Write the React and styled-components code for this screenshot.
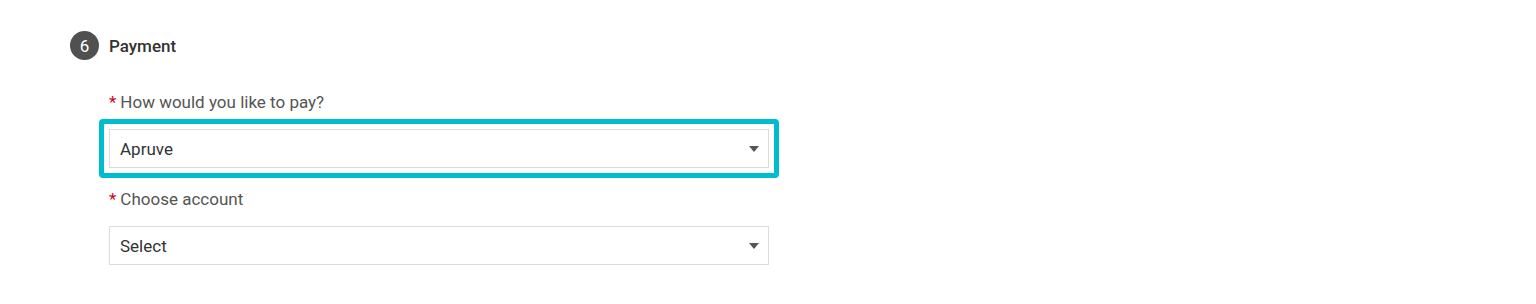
import React from "react";
import styled, { createGlobalStyle } from "styled-components";

const Global = createGlobalStyle`
  html, body { margin: 0; padding: 0; background: #fff; }
  body { font-family: Roboto, "Liberation Sans", Arial, sans-serif; -webkit-font-smoothing: antialiased; }
`;

const Page = styled.div`
  width: 1536px;
  height: 304px;
  box-sizing: border-box;
  padding: 31px 0 0 70px;
`;

const StepHeader = styled.div`
  display: flex;
  align-items: center;
  gap: 10px;
`;

const StepNumber = styled.div`
  width: 29px;
  height: 29px;
  border-radius: 50%;
  background: #505050;
  color: #fff;
  font-size: 17px;
  display: flex;
  align-items: center;
  justify-content: center;
`;

const StepTitle = styled.div`
  font-size: 17px;
  font-weight: 500;
  color: #333;
`;

const Fields = styled.div`
  margin-left: 39px;
  padding-top: 32px;
  display: flex;
  flex-direction: column;
  gap: 21px;
  width: 660px;
`;

const Field = styled.div`
  display: flex;
  flex-direction: column;
  gap: 17px;
`;

const Label = styled.label`
  font-size: 17px;
  line-height: 20px;
  color: #555;
`;

const Required = styled.span`
  color: #d0021b;
  margin-right: 4px;
`;

const Focus = styled.div`
  margin: -10px;
  padding: 5px;
  border: 5px solid ${(p) => (p.$active ? "#00bcd0" : "transparent")};
  border-radius: 4px;
`;

const SelectBox = styled.div`
  box-sizing: border-box;
  height: 39px;
  border: 1px solid #dcdcdc;
  background: #fff;
  display: flex;
  align-items: center;
  justify-content: space-between;
  padding: 0 9px 0 10px;
  font-size: 17px;
  color: #333;
`;

const Arrow = () => (
  <svg width="10" height="6" viewBox="0 0 10 6" aria-hidden="true">
    <path d="M0 0 H10 L5 6 Z" fill="#555" />
  </svg>
);

const Select = ({ value, active }) => (
  <Focus $active={active}>
    <SelectBox role="combobox">
      <span>{value}</span>
      <Arrow />
    </SelectBox>
  </Focus>
);

export default function App() {
  return (
    <>
      <Global />
      <Page>
        <StepHeader>
          <StepNumber>6</StepNumber>
          <StepTitle>Payment</StepTitle>
        </StepHeader>
        <Fields>
          <Field>
            <Label>
              <Required>*</Required>How would you like to pay?
            </Label>
            <Select value="Apruve" active />
          </Field>
          <Field>
            <Label>
              <Required>*</Required>Choose account
            </Label>
            <Select value="Select" />
          </Field>
        </Fields>
      </Page>
    </>
  );
}
